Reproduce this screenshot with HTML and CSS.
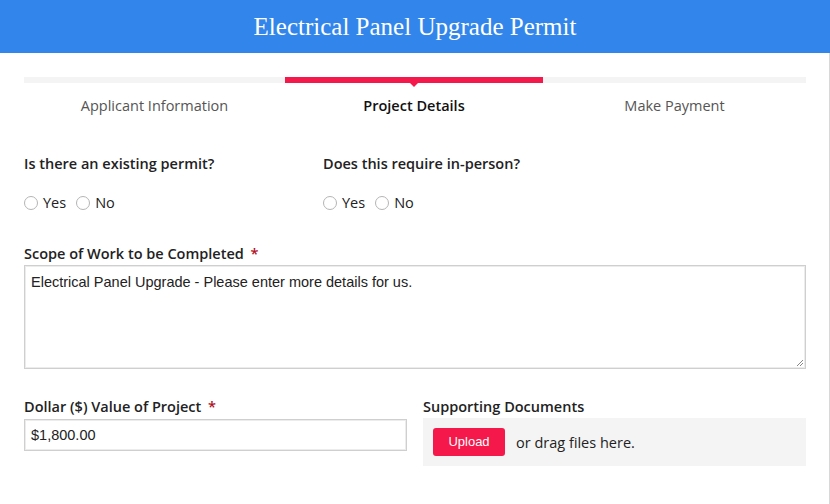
FILE: index.html
```html
<!DOCTYPE html>
<html>
<head>
<meta charset="utf-8">
<link rel="stylesheet" href="styles.css">
</head>
<body>
<header class="top">Electrical Panel Upgrade Permit</header>
<main class="page">
  <nav class="steps">
    <div class="step"><div class="bar"></div><div class="step-label">Applicant Information</div></div>
    <div class="step active"><div class="bar"><span class="notch"></span></div><div class="step-label">Project Details</div></div>
    <div class="step"><div class="bar"></div><div class="step-label">Make Payment</div></div>
  </nav>

  <section class="questions">
    <div class="question">
      <div class="label">Is there an existing permit?</div>
      <div class="radios">
        <span class="radio"><span class="circle"></span>Yes</span>
        <span class="radio"><span class="circle"></span>No</span>
      </div>
    </div>
    <div class="question">
      <div class="label">Does this require in-person?</div>
      <div class="radios">
        <span class="radio"><span class="circle"></span>Yes</span>
        <span class="radio"><span class="circle"></span>No</span>
      </div>
    </div>
  </section>

  <section class="field scope">
    <div class="label">Scope of Work to be Completed <span class="req">*</span></div>
    <div class="textarea">Electrical Panel Upgrade - Please enter more details for us.<span class="grip"><svg width="9" height="9" viewBox="0 0 9 9"><path d="M8 2 L2 8 M8 5 L5 8" stroke="#888" stroke-width="1" fill="none"/></svg></span></div>
  </section>

  <section class="bottom">
    <div class="field">
      <div class="label">Dollar ($) Value of Project <span class="req">*</span></div>
      <div class="input">$1,800.00</div>
    </div>
    <div class="field">
      <div class="label">Supporting Documents</div>
      <div class="drop">
        <span class="upload">Upload</span>
        <span class="drag">or drag files here.</span>
      </div>
    </div>
  </section>
</main>
</body>
</html>
```
FILE: styles.css
```css
html, body {
  margin: 0;
  padding: 0;
  background: #fff;
}
body {
  width: 830px;
  height: 504px;
  overflow: hidden;
  font-family: "Open Sans", "Liberation Sans", sans-serif;
  color: #222;
}
.top {
  height: 53px;
  background: #3286eb;
  color: #fff;
  font-family: "Liberation Serif", "Times New Roman", serif;
  font-size: 25px;
  line-height: 53px;
  text-align: center;
}
.page {
  padding: 24px 23px 0 24px;
  border-right: 1px solid #d8d8d8;
  height: 427px;
}
.steps {
  display: grid;
  grid-template-columns: 261px 258px 263px;
}
.bar {
  position: relative;
  height: 6px;
  background: #f4f4f4;
}
.active .bar {
  background: #f5184a;
}
.notch {
  position: absolute;
  left: 50%;
  bottom: -4px;
  margin-left: -4px;
  width: 0;
  height: 0;
  border-left: 4px solid transparent;
  border-right: 4px solid transparent;
  border-top: 4px solid #f5184a;
}
.step-label {
  text-align: center;
  font-size: 14.5px;
  line-height: 20px;
  padding-top: 13px;
  color: #555;
}
.active .step-label {
  color: #111;
  font-weight: 600;
}
.questions {
  display: flex;
  margin-top: 38px;
}
.question {
  width: 299px;
}
.label {
  font-size: 14.5px;
  font-weight: 600;
  line-height: 20px;
  color: #222;
}
.radios {
  display: flex;
  gap: 10px;
  margin-top: 19px;
  font-size: 14.5px;
  line-height: 20px;
  color: #222;
}
.radio {
  display: flex;
  align-items: center;
}
.circle {
  width: 12px;
  height: 12px;
  border: 1px solid #b5b5b5;
  border-radius: 50%;
  margin-right: 5px;
  background: #fff;
}
.scope {
  margin-top: 31px;
}
.req {
  color: #b00f1f;
  margin-left: 3px;
}
.textarea {
  position: relative;
  margin-top: 1px;
  height: 88px;
  border: 1px solid #cfcfcf;
  box-shadow: inset 0 0 0 1px #ececec;
  padding: 7px 6px;
  font-family: "Liberation Sans", Arial, sans-serif;
  font-size: 14.5px;
  line-height: 18px;
  color: #222;
}
.grip {
  position: absolute;
  right: 1px;
  bottom: 1px;
  line-height: 0;
}
.bottom {
  display: grid;
  grid-template-columns: 1fr 1fr;
  gap: 16px;
  margin-top: 28px;
}
.input {
  margin-top: 2px;
  height: 30px;
  border: 1px solid #cfcfcf;
  box-shadow: inset 0 0 0 1px #ececec;
  padding: 0 6px;
  font-family: "Liberation Sans", Arial, sans-serif;
  font-size: 14.5px;
  line-height: 30px;
  color: #222;
}
.drop {
  margin-top: 1px;
  height: 48px;
  background: #f4f4f4;
  display: flex;
  align-items: center;
  padding-left: 10px;
}
.upload {
  width: 72px;
  height: 28px;
  border-radius: 3px;
  background: #f5184a;
  color: #fff;
  font-family: "Liberation Sans", Arial, sans-serif;
  font-size: 13px;
  line-height: 28px;
  text-align: center;
}
.drag {
  margin-left: 11px;
  font-size: 14.5px;
  color: #222;
}
```
